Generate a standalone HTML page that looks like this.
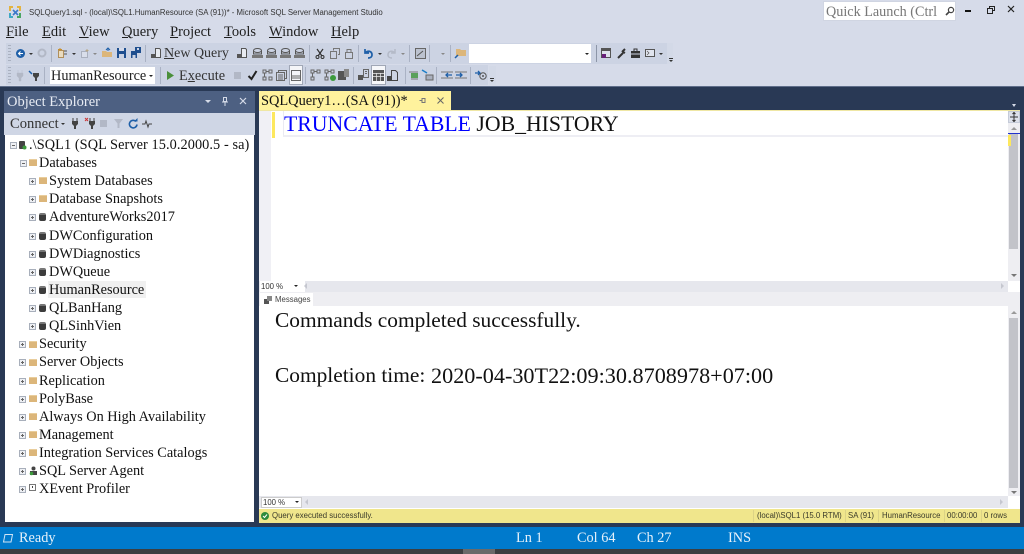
<!DOCTYPE html>
<html><head><meta charset="utf-8">
<style>
html,body{margin:0;padding:0;background:#d6dbe9}
body{width:1024px;height:554px;overflow:hidden;position:relative;background:#d6dbe9;font-family:"Liberation Serif",serif;color:#111;filter:blur(.3px)}
.a{position:absolute}
.t{position:absolute;white-space:nowrap;line-height:1}
.s{font-family:"Liberation Sans",sans-serif}
svg{position:absolute;overflow:visible}
u{text-decoration-thickness:1px;text-underline-offset:1px}
.m{font-size:14.5px;top:25px;color:#1e1e1e}
.r{font-size:14.3px;color:#111;left:0;margin-top:1px}
.b{position:absolute;width:7px;height:7px;border:1px solid #a8afbb;background:#eef0f4;box-sizing:border-box;margin-top:1px}
.b:before{content:"";position:absolute;left:1px;top:2px;width:3px;height:1px;background:#666}
.b.p:after{content:"";position:absolute;left:2px;top:1px;width:1px;height:3px;background:#666}
.f{position:absolute;width:8px;height:6px;background:#dcb67a;border-top:1px solid #e9cd9c}
.d{position:absolute;width:7px;height:8px;background:#3c3c3c;border-radius:2px;border-top:2px solid #777;box-sizing:border-box}
.sep{position:absolute;width:1px;height:17px;background:#aab2c4}
.c{position:absolute;width:0;height:0;border-left:2px solid transparent;border-right:2px solid transparent;border-top:2px solid #333}
.q{font-size:7.8px;top:512px;color:#3a3a2a}
.st{font-size:14.3px;top:531px;color:#e6f1fa}
</style></head><body>

<!-- title -->
<svg style="left:8px;top:5px" width="14" height="14" viewBox="0 0 14 14"><path d="M1 1h4v2H3v3H1zM13 1v5h-2V3H9V1z" fill="#e3b341"/><path d="M1 8h2v3h2v2H1z" fill="#3fa7c4"/><path d="M9 13v-2h2V8h2v5z" fill="#4aa564"/><path d="M5 5l5 5M10 5l-5 5" stroke="#3c78c8" stroke-width="1.6"/></svg>
<div class="t s" style="left:29px;top:9px;font-size:7.8px;color:#333">SQLQuery1.sql - (local)\SQL1.HumanResource (SA (91))* - Microsoft SQL Server Management Studio</div>
<div class="a" style="left:823px;top:1px;width:133px;height:20px;background:#fff;border:1px solid #d0d5e2;box-sizing:border-box"></div>
<div class="t" style="left:826px;top:5px;font-size:14.2px;color:#777;width:115px;overflow:hidden">Quick Launch (Ctrl</div>
<svg style="left:945px;top:6px" width="10" height="10"><circle cx="6" cy="4" r="2.6" fill="none" stroke="#444" stroke-width="1.2"/><path d="M4 6L1 9" stroke="#444" stroke-width="1.6"/></svg>
<div class="a" style="left:965px;top:10px;width:6px;height:2px;background:#111"></div>
<svg style="left:987px;top:6px" width="8" height="8"><path d="M2.500 2V.5h5v4H6M.5 2.500h5v5h-5z" fill="none" stroke="#222"/></svg>
<svg style="left:1007px;top:5px" width="8" height="8"><path d="M1 1l6 6M7 1l-6 6" stroke="#222" stroke-width="1.2"/></svg>

<!-- menu -->
<div class="t m" style="left:6px"><u>F</u>ile</div>
<div class="t m" style="left:42px"><u>E</u>dit</div>
<div class="t m" style="left:79px"><u>V</u>iew</div>
<div class="t m" style="left:122px"><u>Q</u>uery</div>
<div class="t m" style="left:170px"><u>P</u>roject</div>
<div class="t m" style="left:224px"><u>T</u>ools</div>
<div class="t m" style="left:269px"><u>W</u>indow</div>
<div class="t m" style="left:331px"><u>H</u>elp</div>

<!-- toolbar 1 -->
<div class="a" style="left:6px;top:43px;width:667px;height:21px;background:#ccd3e3"></div>
<div class="a" style="left:667px;top:43px;width:6px;height:21px;background:#d3d9e7"></div>
<div class="a" style="left:8px;top:45px;width:3px;height:17px;background:repeating-linear-gradient(#aab1c0 0 1px,transparent 1px 3px)"></div>
<svg style="left:15px;top:48px" width="11" height="11"><circle cx="5.500" cy="5.500" r="4.500" fill="#1e5fa8"/><path d="M8 5.500H3.500M5.500 3.500l-2 2 2 2" stroke="#fff" fill="none"/></svg>
<div class="c" style="left:29px;top:53px"></div>
<svg style="left:37px;top:48px" width="10" height="10"><circle cx="5" cy="5" r="3.500" fill="none" stroke="#b2b8c6" stroke-width="2"/></svg>
<div class="sep" style="left:51px;top:45px"></div>
<svg style="left:58px;top:48px" width="10" height="11"><path d="M.5 2.500h5v7h-5z" fill="#eadcc0" stroke="#b08f5c"/><path d="M6 3h3M6 6h3" stroke="#555"/><path d="M2 0v3M0 1.500h4" stroke="#c89030"/></svg>
<div class="c" style="left:72px;top:53px"></div>
<svg style="left:81px;top:49px" width="9" height="9"><path d="M.5 2.500h6v6h-6z" fill="#d9deea" stroke="#aab0be"/><path d="M6 0v3M4.500 1.500h3" stroke="#b8a888"/></svg>
<div class="c" style="left:93px;top:53px;border-top-color:#888"></div>
<svg style="left:102px;top:47px" width="11" height="11"><path d="M0 4h4l1 1h5v5H0z" fill="#dcb67a"/><path d="M4 3l2-2 2 2M6 1v3" stroke="#1e5fa8" fill="none"/></svg>
<svg style="left:117px;top:48px" width="9" height="10"><path d="M0 0h9v10H0z" fill="#1f4f8f"/><path d="M2 0h5v3H2z" fill="#d6dbe9"/><path d="M2 6h5v4H2z" fill="#ccd3e3"/></svg>
<svg style="left:131px;top:47px" width="10" height="11"><path d="M4 0h6v6H4z" fill="#1f4f8f"/><path d="M0 4h6v7H0z" fill="#1f4f8f"/><path d="M1.500 8h3v3h-3z" fill="#ccd3e3"/><path d="M6 1h2v2H6z" fill="#ccd3e3"/></svg>
<div class="sep" style="left:145px;top:45px"></div>
<svg style="left:151px;top:48px" width="10" height="10"><path d="M4.500.5h4l1 1v8h-5z" fill="#e8ebf1" stroke="#555"/><path d="M0 6h5v4H0z" fill="#555"/></svg>
<div class="t" style="left:164px;top:47px;font-size:14px;color:#333"><u>N</u>ew Query</div>
<svg style="left:237px;top:48px" width="10" height="10"><path d="M4.500.5h4l1 1v8h-5z" fill="#e8ebf1" stroke="#555"/><path d="M0 6h5v4H0z" fill="#555"/></svg>
<svg style="left:252px;top:48px" width="11" height="10"><ellipse cx="5.500" cy="2.500" rx="4" ry="2" fill="none" stroke="#555"/><path d="M1.500 2.500V6h8V2.500" fill="none" stroke="#555"/><path d="M0 7h11v3H0z" fill="#777"/></svg>
<svg style="left:266px;top:48px" width="11" height="10"><ellipse cx="5.500" cy="2.500" rx="4" ry="2" fill="none" stroke="#555"/><path d="M1.500 2.500V6h8V2.500" fill="none" stroke="#555"/><path d="M0 7h11v3H0z" fill="#777"/></svg>
<svg style="left:280px;top:48px" width="11" height="10"><ellipse cx="5.500" cy="2.500" rx="4" ry="2" fill="none" stroke="#555"/><path d="M1.500 2.500V6h8V2.500" fill="none" stroke="#555"/><path d="M0 7h11v3H0z" fill="#777"/></svg>
<svg style="left:294px;top:48px" width="11" height="10"><ellipse cx="5.500" cy="2.500" rx="4" ry="2" fill="none" stroke="#555"/><path d="M1.500 2.500V6h8V2.500" fill="none" stroke="#555"/><path d="M0 7h11v3H0z" fill="#777"/></svg>
<div class="sep" style="left:309px;top:45px"></div>
<svg style="left:315px;top:48px" width="10" height="11"><path d="M2 1l5 7M8 1L3 8" stroke="#333" stroke-width="1.200"/><circle cx="2.500" cy="9" r="1.500" fill="none" stroke="#333"/><circle cx="7.500" cy="9" r="1.500" fill="none" stroke="#333"/></svg>
<svg style="left:330px;top:48px" width="10" height="11"><path d="M3.500 2.500V.5h6v6H8M.5 3.500h6v7h-6z" fill="none" stroke="#777"/></svg>
<svg style="left:344px;top:48px" width="10" height="11"><path d="M1.500 4.500h7v6h-7zM3 4V1.500h4V4" fill="none" stroke="#777"/></svg>
<div class="sep" style="left:358px;top:45px"></div>
<svg style="left:363px;top:48px" width="11" height="11"><path d="M2 1v4h4M2 5c3-3 7-2 7 2 0 2-2 3-4 3" fill="none" stroke="#1e5fa8" stroke-width="1.700"/></svg>
<div class="c" style="left:378px;top:53px"></div>
<svg style="left:386px;top:48px" width="10" height="11"><path d="M9 1v4H5M9 5C6 2 2 3 2 7c0 2 2 3 4 3" fill="none" stroke="#b4bac8" stroke-width="1.500"/></svg>
<div class="c" style="left:401px;top:53px;border-top-color:#888"></div>
<div class="sep" style="left:409px;top:45px"></div>
<svg style="left:415px;top:48px" width="11" height="11"><rect x=".5" y=".5" width="10" height="10" fill="#bcc2cf" stroke="#666"/><path d="M2 8l6-5" stroke="#555"/></svg>
<div class="sep" style="left:429px;top:45px"></div>
<div class="c" style="left:441px;top:53px;border-top-color:#888"></div>
<div class="sep" style="left:450px;top:45px"></div>
<svg style="left:455px;top:48px" width="11" height="11"><path d="M1 1h4l1 1h5v6H1z" fill="#dcb67a"/><path d="M0 10l3-3" stroke="#1e5fa8" stroke-width="1.500"/></svg>
<div class="a" style="left:469px;top:44px;width:122px;height:19px;background:#fff"></div>
<div class="c" style="left:585px;top:53px;border-top-color:#222"></div>
<div class="sep" style="left:596px;top:45px;background:#8d96a8"></div>
<svg style="left:601px;top:48px" width="11" height="11"><rect x=".5" y=".5" width="9" height="9" fill="#dfe3ec" stroke="#555"/><rect x="1" y="1" width="8" height="2" fill="#555"/><rect x="1" y="6" width="4" height="4" fill="#68217a"/></svg>
<svg style="left:616px;top:48px" width="11" height="11"><path d="M2 10l5-5M6 4l3-3M7 4l2 1" stroke="#333" stroke-width="2"/></svg>
<svg style="left:630px;top:48px" width="11" height="11"><rect x="1" y="3" width="9" height="7" fill="#333"/><path d="M4 3V1h3v2" fill="none" stroke="#333"/><path d="M1 6h9" stroke="#ccd3e3"/></svg>
<svg style="left:645px;top:49px" width="10" height="9"><rect x=".5" y=".5" width="9" height="7" fill="#e0e4ee" stroke="#555"/><path d="M2 2l2 2-2 2" fill="none" stroke="#555" stroke-width=".7"/></svg>
<div class="c" style="left:659px;top:53px"></div>
<div class="a" style="left:669px;top:58px;width:4px;height:1px;background:#333"></div>
<div class="c" style="left:669px;top:60px"></div>

<!-- toolbar 2 -->
<div class="a" style="left:6px;top:65px;width:482px;height:20px;background:#ccd3e3"></div>
<div class="a" style="left:8px;top:67px;width:3px;height:17px;background:repeating-linear-gradient(#aab1c0 0 1px,transparent 1px 3px)"></div>
<svg style="left:16px;top:70px" width="8" height="11"><path d="M2 0v3M6 0v3M1 3h6v3L5 8v3H3V8L1 6z" fill="#b2b8c6" stroke="#b2b8c6" stroke-width=".4"/></svg>
<svg style="left:29px;top:70px" width="11" height="11"><path d="M5 0v3M9 0v3M4 3h6v3L8 8v3H6V8L4 6z" fill="#444"/><path d="M0 1l3 3" stroke="#1e5fa8" stroke-width="1.500"/></svg>
<div class="sep" style="left:44px;top:67px"></div>
<div class="a" style="left:50px;top:67px;width:105px;height:17px;background:#fff"></div>
<div class="t" style="left:51px;top:69px;font-size:14.300px;color:#222">HumanResource</div>
<div class="c" style="left:149px;top:75px;border-top-color:#222"></div>
<div class="sep" style="left:160px;top:67px"></div>
<svg style="left:167px;top:71px" width="7" height="9"><path d="M0 0l7 4.500-7 4.500z" fill="#4a8f3a"/></svg>
<div class="t" style="left:179px;top:69px;font-size:14.300px;color:#333">E<u>x</u>ecute</div>
<div class="a" style="left:234px;top:72px;width:7px;height:7px;background:#b2b8c6"></div>
<svg style="left:247px;top:70px" width="11" height="11"><path d="M1.500 6l3 3 5-8" fill="none" stroke="#222" stroke-width="2"/></svg>
<svg style="left:262px;top:69px" width="11" height="12"><path d="M1 1h3v3H1zM7 1h3v3H7zM1 8h3v3H1zM7 8h3v3H7zM2.500 4v4M4 2.500h3" fill="none" stroke="#666"/></svg>
<svg style="left:276px;top:70px" width="11" height="11"><path d="M.5 2.500h8v8h-8zM2.500 2.500V.5h8v8H8.500M2 5h5M2 7h5M2 9h5" fill="none" stroke="#666"/></svg>
<div class="a" style="left:289px;top:65px;width:14px;height:20px;background:#f4f5f8;border:1px solid #a0a7b6;box-sizing:border-box"></div>
<svg style="left:291px;top:70px" width="10" height="11"><rect x=".5" y=".5" width="9" height="10" fill="none" stroke="#666"/><path d="M1 6h8M1 8h8" stroke="#666"/></svg>
<div class="sep" style="left:305px;top:67px"></div>
<svg style="left:310px;top:69px" width="11" height="12"><path d="M1 1h3v3H1zM7 1h3v3H7zM1 8h3v3H1zM2.500 4v4M4 2.500h3" fill="none" stroke="#666"/></svg>
<svg style="left:324px;top:69px" width="12" height="12"><path d="M1 1h3v3H1zM7 1h3v3H7zM1 8h3v3H1zM2.500 4v4M4 2.500h3" fill="none" stroke="#666"/><circle cx="9" cy="9" r="3" fill="#3c9a3c"/></svg>
<div class="a" style="left:338px;top:71px;width:8px;height:9px;background:#555"></div>
<div class="a" style="left:344px;top:69px;width:5px;height:8px;background:#888"></div>
<div class="sep" style="left:353px;top:67px"></div>
<svg style="left:358px;top:69px" width="11" height="12"><path d="M5.500.5h5v8h-5z" fill="#ccd3e3" stroke="#666"/><path d="M7 2.500h2M7 4.500h2" stroke="#666"/><path d="M0 6h5v5H0z" fill="#555"/></svg>
<div class="a" style="left:371px;top:65px;width:15px;height:20px;background:#f6f7fa;border:1px solid #a0a7b6;box-sizing:border-box"></div>
<svg style="left:373px;top:70px" width="11" height="11"><rect width="11" height="11" fill="#555"/><path d="M0 3.500h11M0 6.500h11M3.500 3v8M7.500 3v8" stroke="#eee" stroke-width=".7"/></svg>
<svg style="left:387px;top:70px" width="11" height="11"><path d="M4.500.5h4l2 2v8h-6z" fill="none" stroke="#444"/><rect x="0" y="6" width="5" height="5" fill="#444"/></svg>
<div class="sep" style="left:405px;top:67px"></div>
<svg style="left:408px;top:70px" width="11" height="11"><path d="M1 2h9M3 9h7" stroke="#777"/><rect x="3" y="3" width="7" height="5" fill="#5aa05a"/></svg>
<svg style="left:422px;top:69px" width="12" height="12"><path d="M4 6h7v5H4z" fill="#aab0be" stroke="#666"/><path d="M0 1l5 3" stroke="#1e7fc8" stroke-width="1.500"/></svg>
<div class="sep" style="left:436px;top:67px"></div>
<svg style="left:441px;top:70px" width="12" height="10"><path d="M0 2h12M0 8h12" stroke="#777"/><path d="M11 5H5M7 3L5 5l2 2" stroke="#1e5fa8" fill="none" stroke-width="1.300"/></svg>
<svg style="left:455px;top:70px" width="12" height="10"><path d="M0 2h12M0 8h12" stroke="#777"/><path d="M1 5h6M5 3l2 2-2 2" stroke="#1e5fa8" fill="none" stroke-width="1.300"/></svg>
<div class="sep" style="left:470px;top:67px"></div>
<svg style="left:475px;top:70px" width="12" height="10"><path d="M0 3h5M3 1l2 2-2 2" stroke="#1e5fa8" fill="none" stroke-width="1.300"/><circle cx="8" cy="6" r="3.200" fill="none" stroke="#555"/><circle cx="8" cy="6" r="1" fill="#555"/></svg>
<div class="a" style="left:489px;top:66px;width:7px;height:19px;background:#d3d9e7"></div>
<div class="a" style="left:490px;top:78px;width:4px;height:1px;background:#333"></div>
<div class="c" style="left:490px;top:80px"></div>

<!-- dark workspace -->
<div class="a" style="left:0;top:86px;width:1024px;height:441px;background:#293955;border-top:1px solid #5f6e8a;box-sizing:border-box"></div>

<!-- object explorer -->
<div class="a" style="left:4px;top:91px;width:251px;height:22px;background:#4d6082"></div>
<div class="t" style="left:7px;top:95px;font-size:14.500px;color:#e8ecf4">Object Explorer</div>
<div class="c" style="left:205px;top:100px;border-top:3px solid #d5dbe8;border-left-width:3px;border-right-width:3px"></div>
<svg style="left:222px;top:97px" width="6" height="9"><path d="M1.500.5h3v4h-3zM0 5h6M3 5v4" fill="none" stroke="#d5dbe8"/></svg>
<svg style="left:239px;top:97px" width="8" height="8"><path d="M1 1l6 6M7 1l-6 6" stroke="#d5dbe8" stroke-width="1.200"/></svg>
<div class="a" style="left:4px;top:113px;width:251px;height:22px;background:#cfd6e5"></div>
<div class="t" style="left:10px;top:117px;font-size:14.600px;color:#333">Connect</div>
<div class="c" style="left:61px;top:123px"></div>
<svg style="left:71px;top:118px" width="8" height="11"><path d="M2 0v3M6 0v3" stroke="#444"/><path d="M1 3h6v3L5 8v3H3V8L1 6z" fill="#444"/></svg>
<svg style="left:84px;top:118px" width="12" height="11"><path d="M6 0v3M10 0v3" stroke="#444"/><path d="M5 3h6v3L9 8v3H7V8L5 6z" fill="#444"/><path d="M1 0l3 3M4 0L1 3" stroke="#c33"/></svg>
<div class="a" style="left:100px;top:120px;width:7px;height:7px;background:#b2b8c6"></div>
<svg style="left:114px;top:119px" width="9" height="10"><path d="M0 0h9L5.500 4.500V9h-2V4.500z" fill="#b2b8c6"/></svg>
<svg style="left:128px;top:118px" width="10" height="11"><path d="M8 3.500A3.800 3.800 0 1 0 9 6.500" fill="none" stroke="#1e5fa8" stroke-width="1.600"/><path d="M6 3.500h3.500V0z" fill="#1e5fa8"/></svg>
<svg style="left:142px;top:119px" width="10" height="9"><path d="M0 5h3l1-3 2 6 1-3h3" fill="none" stroke="#444"/></svg>

<div class="a" style="left:5px;top:135px;width:249px;height:387px;background:#fff"></div>

<!-- tree -->
<div class="b" style="left:10px;top:141px"></div>
<svg style="left:18px;top:140px" width="9" height="10"><rect x="1" y="1" width="6" height="8" rx="1" fill="#444"/><circle cx="6.500" cy="7.500" r="2" fill="#3c9a3c"/></svg>
<div class="t r" style="left:29px;top:137px;letter-spacing:.08px">.\SQL1 (SQL Server 15.0.2000.5 - sa)</div>
<div class="b" style="left:20px;top:159px"></div><div class="f" style="left:29px;top:159px"></div>
<div class="t r" style="left:39px;top:155px">Databases</div>
<div class="b p" style="left:29px;top:177px"></div><div class="f" style="left:39px;top:177px"></div>
<div class="t r" style="left:49px;top:173px">System Databases</div>
<div class="b p" style="left:29px;top:195px"></div><div class="f" style="left:39px;top:195px"></div>
<div class="t r" style="left:49px;top:191px">Database Snapshots</div>
<div class="b p" style="left:29px;top:213px"></div><div class="d" style="left:39px;top:213px"></div>
<div class="t r" style="left:49px;top:209px">AdventureWorks2017</div>
<div class="b p" style="left:29px;top:232px"></div><div class="d" style="left:39px;top:232px"></div>
<div class="t r" style="left:49px;top:228px">DWConfiguration</div>
<div class="b p" style="left:29px;top:250px"></div><div class="d" style="left:39px;top:250px"></div>
<div class="t r" style="left:49px;top:246px">DWDiagnostics</div>
<div class="b p" style="left:29px;top:268px"></div><div class="d" style="left:39px;top:268px"></div>
<div class="t r" style="left:49px;top:264px">DWQueue</div>
<div class="b p" style="left:29px;top:286px"></div><div class="d" style="left:39px;top:286px"></div>
<div class="a" style="left:48px;top:281px;width:98px;height:17px;background:#f0f0f0"></div>
<div class="t r" style="left:49px;top:282px">HumanResource</div>
<div class="b p" style="left:29px;top:304px"></div><div class="d" style="left:39px;top:304px"></div>
<div class="t r" style="left:49px;top:300px">QLBanHang</div>
<div class="b p" style="left:29px;top:322px"></div><div class="d" style="left:39px;top:322px"></div>
<div class="t r" style="left:49px;top:318px">QLSinhVien</div>
<div class="b p" style="left:19px;top:340px"></div><div class="f" style="left:29px;top:341px"></div>
<div class="t r" style="left:39px;top:336px">Security</div>
<div class="b p" style="left:19px;top:358px"></div><div class="f" style="left:29px;top:359px"></div>
<div class="t r" style="left:39px;top:354px">Server Objects</div>
<div class="b p" style="left:19px;top:377px"></div><div class="f" style="left:29px;top:377px"></div>
<div class="t r" style="left:39px;top:373px">Replication</div>
<div class="b p" style="left:19px;top:395px"></div><div class="f" style="left:29px;top:395px"></div>
<div class="t r" style="left:39px;top:391px">PolyBase</div>
<div class="b p" style="left:19px;top:413px"></div><div class="f" style="left:29px;top:413px"></div>
<div class="t r" style="left:39px;top:409px">Always On High Availability</div>
<div class="b p" style="left:19px;top:431px"></div><div class="f" style="left:29px;top:431px"></div>
<div class="t r" style="left:39px;top:427px">Management</div>
<div class="b p" style="left:19px;top:449px"></div><div class="f" style="left:29px;top:449px"></div>
<div class="t r" style="left:39px;top:445px">Integration Services Catalogs</div>
<div class="b p" style="left:19px;top:467px"></div>
<svg style="left:29px;top:466px" width="8" height="10"><circle cx="4.500" cy="2.500" r="2" fill="#444"/><path d="M1 9V5h7v4z" fill="#444"/><circle cx="2.500" cy="7.500" r="1.800" fill="#3c9a3c"/></svg>
<div class="t r" style="left:39px;top:463px">SQL Server Agent</div>
<div class="b p" style="left:19px;top:485px"></div>
<svg style="left:29px;top:484px" width="8" height="9"><rect x=".5" y=".5" width="6" height="6" fill="#fff" stroke="#777"/><path d="M3.500 2v2" stroke="#444"/></svg>
<div class="t r" style="left:39px;top:481px">XEvent Profiler</div>

<!-- tab -->
<div class="a" style="left:259px;top:91px;width:192px;height:20px;background:#fff29d"></div>
<div class="t" style="left:261px;top:94px;font-size:14.400px;color:#111">SQLQuery1…(SA (91))*</div>
<svg style="left:419px;top:98px" width="7" height="5"><path d="M.5 2.500H3M3 .5h3v4H3z" fill="none" stroke="#777"/></svg>
<svg style="left:437px;top:97px" width="7" height="7"><path d="M.5.500l6 6M6.500.500l-6 6" stroke="#666"/></svg>
<div class="c" style="left:1012px;top:104px;border-top:3px solid #d5dbe8;border-left-width:2.500px;border-right-width:2.500px"></div>

<!-- editor -->
<div class="a" style="left:259px;top:110px;width:761px;height:1px;background:#efe7a4"></div>
<div class="a" style="left:259px;top:111px;width:761px;height:399px;background:#fff"></div>
<div class="a" style="left:259px;top:111px;width:12px;height:170px;background:#f0f0f5"></div>
<div class="a" style="left:272px;top:112px;width:3px;height:26px;background:#fde85e"></div>
<div class="a" style="left:283px;top:111px;width:726px;height:26px;background:#fff;border-left:1px solid #eaeaf2;border-bottom:2px solid #eeeef4;box-sizing:border-box"></div>
<div class="t" style="left:284px;top:114px;font-size:21.750px;color:#111"><span style="color:#0000ff">TRUNCATE TABLE</span> JOB_HISTORY</div>

<!-- editor scrollbar -->
<div class="a" style="left:1008px;top:111px;width:12px;height:170px;background:#eeeef2"></div>
<div class="a" style="left:1008px;top:111px;width:12px;height:12px;background:#dce0ea;border:1px solid #c5cbd8;box-sizing:border-box"></div>
<svg style="left:1010px;top:112px" width="8" height="10"><path d="M0 5h8M4 0v10M2.500 2L4 .5 5.500 2M2.500 8L4 9.500 5.500 8" fill="none" stroke="#333"/></svg>
<div class="a" style="left:1011px;top:127px;border-left:3px solid transparent;border-right:3px solid transparent;border-bottom:3px solid #999;width:0;height:0"></div>
<div class="a" style="left:1008px;top:133px;width:12px;height:1px;background:#2233cc"></div>
<div class="a" style="left:1009px;top:134px;width:9px;height:115px;background:#c2c3c9"></div>
<div class="a" style="left:1008px;top:135px;width:3px;height:11px;background:#fde85e"></div>
<div class="a" style="left:1011px;top:274px;border-left:3px solid transparent;border-right:3px solid transparent;border-top:3px solid #777;width:0;height:0"></div>

<!-- splitter/zoom row -->
<div class="a" style="left:259px;top:281px;width:749px;height:11px;background:#e6e7ed"></div>
<div class="a" style="left:260px;top:281px;width:45px;height:11px;background:#fff"></div>
<div class="t s" style="left:261px;top:283px;font-size:7.800px;color:#333">100 %</div>
<div class="c" style="left:294px;top:285px;border-top-color:#222"></div>
<div class="a" style="left:304px;top:283px;border-right:3px solid #c5c7cf;border-top:3px solid transparent;border-bottom:3px solid transparent;width:0;height:0"></div>
<div class="a" style="left:1001px;top:283px;border-left:3px solid #c5c7cf;border-top:3px solid transparent;border-bottom:3px solid transparent;width:0;height:0"></div>
<div class="a" style="left:259px;top:292px;width:761px;height:14px;background:#eeeef2"></div>

<!-- messages -->
<div class="a" style="left:260px;top:293px;width:53px;height:14px;background:#fff"></div>
<svg style="left:264px;top:296px" width="8" height="8"><rect x="0" y="3" width="5" height="5" fill="#555"/><rect x="3" y="0" width="5" height="5" fill="#888"/></svg>
<div class="t s" style="left:275px;top:296px;font-size:7.800px;color:#444">Messages</div>
<div class="t" style="left:275px;top:310px;font-size:21.400px;color:#111">Commands completed successfully.</div>
<div class="t" style="left:275px;top:365px;font-size:21.400px;color:#111">Completion time:</div>
<div class="t" style="left:431px;top:365px;font-size:22.200px;color:#111">2020-04-30T22:09:30.8708978+07:00</div>

<!-- results scrollbar -->
<div class="a" style="left:1008px;top:306px;width:12px;height:190px;background:#eeeef2"></div>
<div class="a" style="left:1011px;top:311px;border-left:3px solid transparent;border-right:3px solid transparent;border-bottom:3px solid #999;width:0;height:0"></div>
<div class="a" style="left:1009px;top:318px;width:9px;height:170px;background:#c2c3c9"></div>
<div class="a" style="left:1011px;top:491px;border-left:3px solid transparent;border-right:3px solid transparent;border-top:3px solid #777;width:0;height:0"></div>

<div class="a" style="left:259px;top:496px;width:749px;height:12px;background:#e6e7ed"></div>
<div class="a" style="left:261px;top:497px;width:41px;height:11px;background:#fff;border:1px solid #ccc;box-sizing:border-box"></div>
<div class="t s" style="left:263px;top:499px;font-size:7.800px;color:#333">100 %</div>
<div class="c" style="left:295px;top:501px;border-top-color:#222"></div>
<div class="a" style="left:305px;top:499px;border-right:3px solid #c5c7cf;border-top:3px solid transparent;border-bottom:3px solid transparent;width:0;height:0"></div>
<div class="a" style="left:1000px;top:499px;border-left:3px solid #c5c7cf;border-top:3px solid transparent;border-bottom:3px solid transparent;width:0;height:0"></div>

<!-- query status -->
<div class="a" style="left:259px;top:509px;width:761px;height:14px;background:#f0e68c"></div>
<svg style="left:261px;top:512px" width="8" height="8"><circle cx="4" cy="4" r="4" fill="#2e8b3c"/><path d="M2 4l1.500 1.500L6 2.500" fill="none" stroke="#fff"/></svg>
<div class="t s q" style="left:272px">Query executed successfully.</div>
<div class="t s q" style="left:757px">(local)\SQL1 (15.0 RTM)</div>
<div class="t s q" style="left:848px">SA (91)</div>
<div class="t s q" style="left:882px">HumanResource</div>
<div class="t s q" style="left:947px">00:00:00</div>
<div class="t s q" style="left:984px">0 rows</div>
<div class="a" style="left:753px;top:510px;width:1px;height:12px;background:#dcd386"></div>
<div class="a" style="left:845px;top:510px;width:1px;height:12px;background:#dcd386"></div>
<div class="a" style="left:878px;top:510px;width:1px;height:12px;background:#dcd386"></div>
<div class="a" style="left:944px;top:510px;width:1px;height:12px;background:#dcd386"></div>
<div class="a" style="left:981px;top:510px;width:1px;height:12px;background:#dcd386"></div>

<!-- status bar -->
<div class="a" style="left:0;top:527px;width:1024px;height:22px;background:#007acc"></div>
<svg style="left:3px;top:534px" width="10" height="9"><path d="M2 .5h7.500L8 8H.5z" fill="none" stroke="#cfe4f5"/></svg>
<div class="t st" style="left:19px">Ready</div>
<div class="t st" style="left:516px">Ln 1</div>
<div class="t st" style="left:577px">Col 64</div>
<div class="t st" style="left:637px">Ch 27</div>
<div class="t st" style="left:728px">INS</div>
<div class="a" style="left:0;top:549px;width:1024px;height:5px;background:#3c3f41"></div>
<div class="a" style="left:463px;top:549px;width:32px;height:5px;background:#6a6a6a"></div>
</body></html>
